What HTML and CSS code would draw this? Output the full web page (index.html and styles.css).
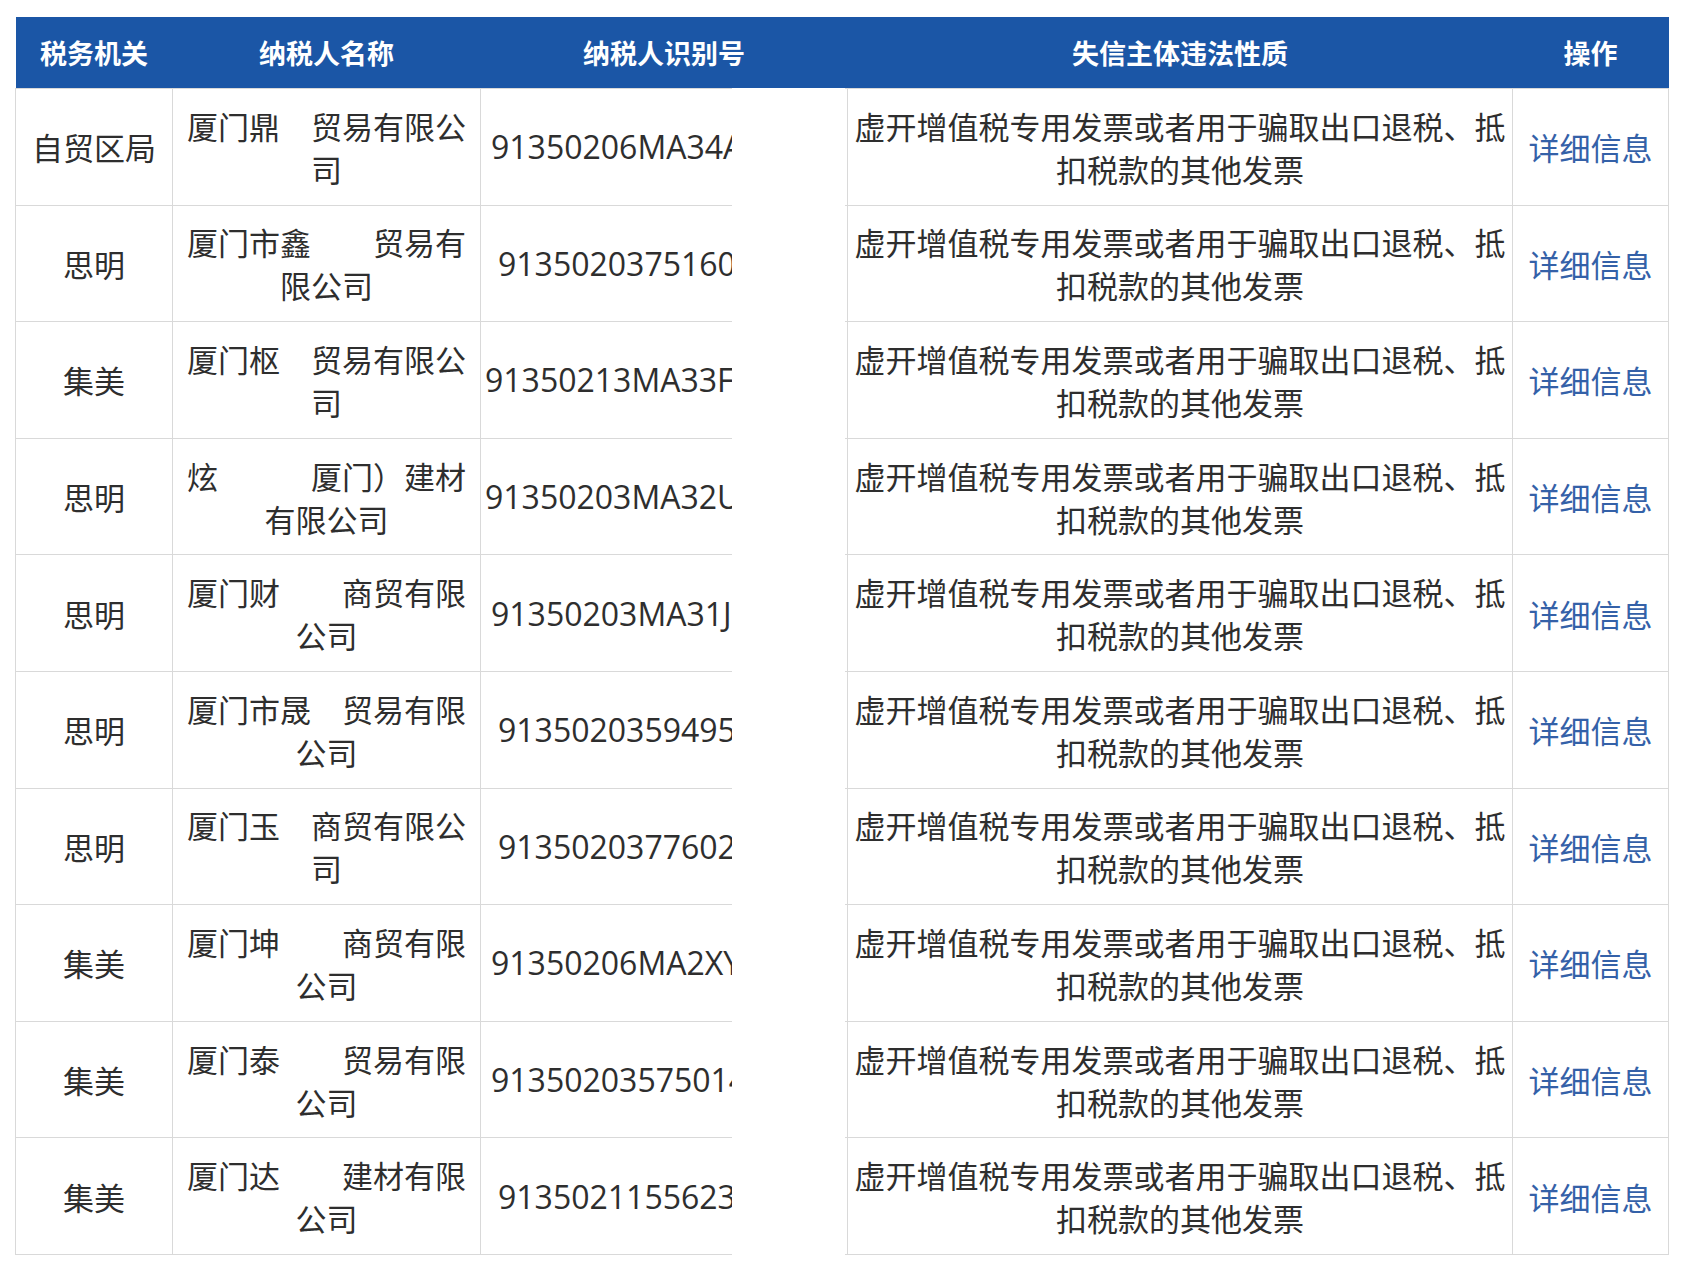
FILE: index.html
```html
<!DOCTYPE html>
<html lang="zh-CN">
<head>
<meta charset="utf-8">
<title>失信主体名单</title>
<link rel="stylesheet" href="styles.css">
</head>
<body>
<div class="page">
  <div class="table-wrap">
    <table class="list">
      <colgroup>
        <col class="c-org">
        <col class="c-name">
        <col class="c-id">
        <col class="c-nature">
        <col class="c-op">
      </colgroup>
      <thead>
        <tr>
          <th>税务机关</th>
          <th>纳税人名称</th>
          <th>纳税人识别号</th>
          <th>失信主体违法性质</th>
          <th>操作</th>
        </tr>
      </thead>
      <tbody>
        <tr>
          <td class="org">自贸区局</td>
          <td class="name">厦门鼎　贸易有限公<br>司</td>
          <td class="id">91350206MA34A</td>
          <td class="nature">虚开增值税专用发票或者用于骗取出口退税、抵<br>扣税款的其他发票</td>
          <td class="op"><a href="#">详细信息</a></td>
        </tr>
        <tr>
          <td class="org">思明</td>
          <td class="name">厦门市鑫　　贸易有<br>限公司</td>
          <td class="id id-b">9135020375160</td>
          <td class="nature">虚开增值税专用发票或者用于骗取出口退税、抵<br>扣税款的其他发票</td>
          <td class="op"><a href="#">详细信息</a></td>
        </tr>
        <tr>
          <td class="org">集美</td>
          <td class="name">厦门枢　贸易有限公<br>司</td>
          <td class="id id-a">91350213MA33F</td>
          <td class="nature">虚开增值税专用发票或者用于骗取出口退税、抵<br>扣税款的其他发票</td>
          <td class="op"><a href="#">详细信息</a></td>
        </tr>
        <tr>
          <td class="org">思明</td>
          <td class="name">炫　　　厦门）建材<br>有限公司</td>
          <td class="id id-a">91350203MA32U</td>
          <td class="nature">虚开增值税专用发票或者用于骗取出口退税、抵<br>扣税款的其他发票</td>
          <td class="op"><a href="#">详细信息</a></td>
        </tr>
        <tr>
          <td class="org">思明</td>
          <td class="name">厦门财　　商贸有限<br>公司</td>
          <td class="id">91350203MA31J</td>
          <td class="nature">虚开增值税专用发票或者用于骗取出口退税、抵<br>扣税款的其他发票</td>
          <td class="op"><a href="#">详细信息</a></td>
        </tr>
        <tr>
          <td class="org">思明</td>
          <td class="name">厦门市晟　贸易有限<br>公司</td>
          <td class="id id-b">9135020359495</td>
          <td class="nature">虚开增值税专用发票或者用于骗取出口退税、抵<br>扣税款的其他发票</td>
          <td class="op"><a href="#">详细信息</a></td>
        </tr>
        <tr>
          <td class="org">思明</td>
          <td class="name">厦门玉　商贸有限公<br>司</td>
          <td class="id id-b">9135020377602</td>
          <td class="nature">虚开增值税专用发票或者用于骗取出口退税、抵<br>扣税款的其他发票</td>
          <td class="op"><a href="#">详细信息</a></td>
        </tr>
        <tr>
          <td class="org">集美</td>
          <td class="name">厦门坤　　商贸有限<br>公司</td>
          <td class="id">91350206MA2XY</td>
          <td class="nature">虚开增值税专用发票或者用于骗取出口退税、抵<br>扣税款的其他发票</td>
          <td class="op"><a href="#">详细信息</a></td>
        </tr>
        <tr>
          <td class="org">集美</td>
          <td class="name">厦门泰　　贸易有限<br>公司</td>
          <td class="id">91350203575014</td>
          <td class="nature">虚开增值税专用发票或者用于骗取出口退税、抵<br>扣税款的其他发票</td>
          <td class="op"><a href="#">详细信息</a></td>
        </tr>
        <tr>
          <td class="org">集美</td>
          <td class="name">厦门达　　建材有限<br>公司</td>
          <td class="id id-b">9135021155623</td>
          <td class="nature">虚开增值税专用发票或者用于骗取出口退税、抵<br>扣税款的其他发票</td>
          <td class="op"><a href="#">详细信息</a></td>
        </tr>
      </tbody>
    </table>
    <div class="redact"></div>
  </div>
</div>
</body>
</html>
```

FILE: styles.css
```css
html, body {
  margin: 0;
  padding: 0;
  background: #ffffff;
}

.page {
  padding: 17px 18px 0 15px;
  font-family: "Noto Sans CJK SC", "Microsoft YaHei", sans-serif;
  color: #333333;
}

.table-wrap {
  position: relative;
  width: 1653px;
}

.list {
  width: 1653px;
  table-layout: fixed;
  border-collapse: collapse;
}

.c-org { width: 157px; }
.c-name { width: 308px; }
.c-id { width: 367px; }
.c-nature { width: 665px; }
.c-op { width: 156px; }

.list th {
  height: 71px;
  padding: 0;
  background: #1b56a6;
  color: #ffffff;
  font-size: 27px;
  font-weight: 700;
  text-align: center;
  vertical-align: middle;
  border: 0;
}

.list td {
  height: 115.6px;
  padding: 0;
  border: 1px solid #d9d9d9;
  text-align: center;
  vertical-align: middle;
  font-size: 31px;
  line-height: 43px;
  color: #2e2e2e;
}

.list td.name {
  padding: 0 12px;
}

.list td.id {
  text-align: left;
  padding-left: 10px;
  font-family: "Open Sans", "Noto Sans", sans-serif;
  font-size: 32px;
  white-space: nowrap;
  overflow: hidden;
}

.list td.id-a {
  padding-left: 4px;
}

.list td.id-b {
  padding-left: 17px;
}

.list td.nature {
  padding: 0 5px;
}

.list td.op a {
  color: #3461a8;
  text-decoration: none;
}

.redact {
  position: absolute;
  left: 717px;
  top: 71px;
  width: 113px;
  bottom: -2px;
  background: #ffffff;
}
```
